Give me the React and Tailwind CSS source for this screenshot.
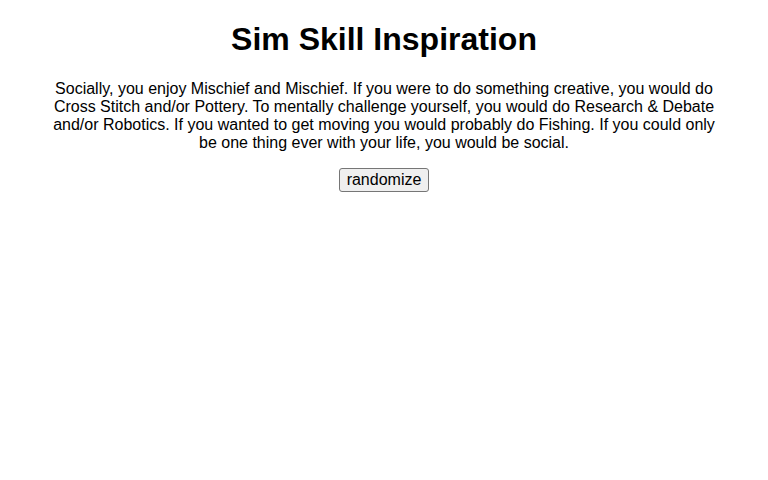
export default function App() {
  return (
    <div className="min-h-screen bg-white text-black font-['Liberation_Sans',Arial,sans-serif] text-center px-[52px]">
      <h1 className="pt-[21px] mb-[22px] text-[32px] leading-[37px] font-bold">Sim Skill Inspiration</h1>
      <p className="text-[16px] leading-[18px]">
        Socially, you enjoy Mischief and Mischief. If you were to do something creative, you would do
        Cross Stitch and/or Pottery. To mentally challenge yourself, you would do Research &amp; Debate
        and/or Robotics. If you wanted to get moving you would probably do Fishing. If you could only
        be one thing ever with your life, you would be social.
      </p>
      <div className="mt-[16px]">
        <button className="text-[16px] leading-[18px] px-[7px] py-[2px] border border-[#767676] rounded-[3px] bg-[#efefef] text-black">
          randomize
        </button>
      </div>
    </div>
  );
}
